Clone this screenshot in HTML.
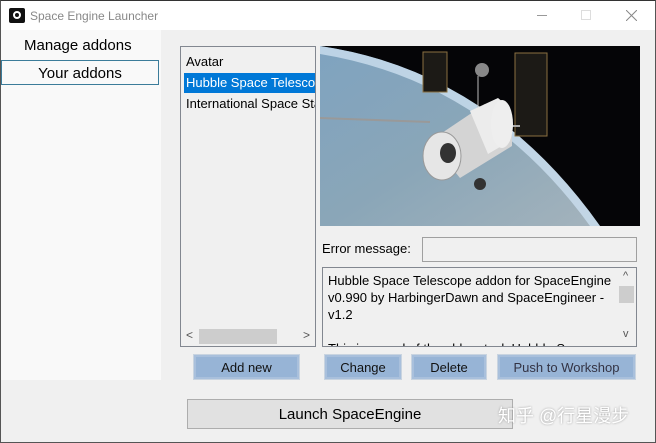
<!DOCTYPE html><html><head><style>
*{margin:0;padding:0;box-sizing:border-box}
body{width:656px;height:443px;overflow:hidden;background:#f0f0f0;font-family:"Segoe UI","Liberation Sans",sans-serif;font-size:13px;color:#000;position:relative}
.a{position:absolute}
.btn{position:absolute;background:#97b4d6;border:1px solid #c9d4e0;box-shadow:inset 0 0 0 2px #a9c0dc;text-align:center;line-height:26px;font-size:13px;color:#111}
</style></head><body>
<div class="a" style="left:0;top:0;width:656px;height:443px;border:1px solid #555;border-top-color:#333"></div>
<div class="a" style="left:1px;top:1px;width:654px;height:29px;background:#fff"></div>
<div class="a" style="left:9px;top:8px;width:16px;height:15px;background:#111;border-radius:2px"><div class="a" style="left:4px;top:3px;width:8px;height:8px;border:2px solid #fff;border-radius:50%"></div></div>
<div class="a" style="left:30px;top:9px;color:#888;font-size:12px">Space Engine Launcher</div>
<div class="a" style="left:537px;top:15px;width:10px;height:1px;background:#999"></div>
<div class="a" style="left:581px;top:10px;width:10px;height:10px;border:1px solid #ddd"></div>
<svg class="a" style="left:626px;top:10px" width="11" height="11"><path d="M0,0L11,11M11,0L0,11" stroke="#888" stroke-width="1"/></svg>
<div class="a" style="left:1px;top:30px;width:160px;height:350px;background:#f9f9f9"></div>
<div class="a" style="left:24px;top:37px;font-size:15px">Manage addons</div>
<div class="a" style="left:1px;top:60px;width:158px;height:25px;border:1px solid #3b7c9a;text-align:center;font-size:15px;line-height:25px">Your addons</div>
<div class="a" style="left:180px;top:46px;width:136px;height:301px;border:1px solid #828790;background:#f0f0f0;overflow:hidden">
<div class="a" style="left:5px;top:7px;white-space:nowrap">Avatar</div>
<div class="a" style="left:3px;top:26px;width:131px;height:20px;background:#0078d7;color:#fff;padding-left:2px;line-height:20px;white-space:nowrap;overflow:hidden">Hubble Space Telescope</div>
<div class="a" style="left:5px;top:49px;white-space:nowrap">International Space Station</div>
<div class="a" style="left:0;top:280px;width:134px;height:19px;background:#f0f0f0"></div>
<div class="a" style="left:5px;top:281px;font-size:12px;color:#555">&lt;</div>
<div class="a" style="left:122px;top:281px;font-size:12px;color:#555">&gt;</div>
<div class="a" style="left:18px;top:282px;width:78px;height:15px;background:#cdcdcd"></div>
</div>
<svg class="a" style="left:320px;top:46px" width="320" height="180" viewBox="0 0 320 180">
<defs><linearGradient id="e" x1="0" y1="0" x2="1" y2="1"><stop offset="0" stop-color="#7fa3c0"/><stop offset=".5" stop-color="#8aa6b8"/><stop offset="1" stop-color="#a4b3bc"/></linearGradient></defs>
<rect width="320" height="180" fill="#050507"/>
<path d="M0,0 Q170,25 280,180 L0,180Z" fill="url(#e)"/>
<path d="M0,0 Q170,25 280,180 L270,180 Q165,35 0,8Z" fill="#c8dcec" opacity=".85"/>
<line x1="0" y1="72" x2="110" y2="76" stroke="#999" stroke-width="2"/>
<rect x="103" y="6" width="24" height="40" fill="#1c1a16" stroke="#8a7040"/>
<rect x="195" y="7" width="32" height="83" fill="#1c1a16" stroke="#8a7040"/>
<line x1="180" y1="80" x2="200" y2="80" stroke="#aaa" stroke-width="2"/>
<line x1="158" y1="30" x2="158" y2="62" stroke="#bbb"/>
<circle cx="162" cy="24" r="7" fill="#888"/>
<circle cx="160" cy="138" r="6" fill="#333"/>
<path d="M110,95 L165,58 L192,70 L192,100 L140,132Z" fill="#d4d4d4"/>
<path d="M150,65 L178,52 L190,62 L190,95 L168,108Z" fill="#ececec"/>
<ellipse cx="182" cy="78" rx="11" ry="24" fill="#eee"/>
<ellipse cx="122" cy="110" rx="19" ry="24" fill="#e6e6e6" stroke="#999"/>
<ellipse cx="128" cy="107" rx="8" ry="10" fill="#333"/>
</svg>
<div class="a" style="left:322px;top:241px">Error message:</div>
<div class="a" style="left:422px;top:237px;width:215px;height:25px;border:1px solid #a0a0a0;background:#f0f0f0"></div>
<div class="a" style="left:322px;top:267px;width:315px;height:80px;border:1px solid #828790;background:#f0f0f0;overflow:hidden">
<div class="a" style="left:5px;top:4px;width:290px;line-height:17px">Hubble Space Telescope addon for SpaceEngine v0.990 by HarbingerDawn and SpaceEngineer - v1.2<br><br>This is a mod of the older stock Hubble Space</div>
<div class="a" style="left:296px;top:0;width:17px;height:78px;background:#f0f0f0"></div>
<div class="a" style="left:300px;top:2px;font-size:11px;color:#555">^</div>
<div class="a" style="left:296px;top:18px;width:15px;height:17px;background:#cdcdcd"></div>
<div class="a" style="left:300px;top:60px;font-size:11px;color:#555">v</div>
</div>
<div class="btn" style="left:193px;top:354px;width:107px;height:26px">Add new</div>
<div class="btn" style="left:324px;top:354px;width:78px;height:26px">Change</div>
<div class="btn" style="left:411px;top:354px;width:76px;height:26px">Delete</div>
<div class="btn" style="left:497px;top:354px;width:139px;height:26px;color:#334">Push to Workshop</div>
<div class="a" style="left:187px;top:399px;width:326px;height:30px;background:#e1e1e1;border:1px solid #adadad;text-align:center;line-height:30px;font-size:15px">Launch SpaceEngine</div>
<div class="a" style="left:498px;top:402px;font-size:18px;color:#fff;font-family:'Liberation Sans','Noto Sans CJK SC',sans-serif;text-shadow:0 0 2px #999">知乎 @行星漫步</div>
</body></html>
